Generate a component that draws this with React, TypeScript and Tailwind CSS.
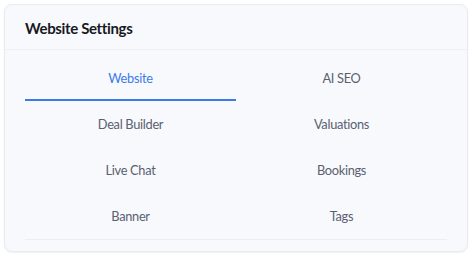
import { useState } from 'react';

const tabs = [
  'Website',
  'AI SEO',
  'Deal Builder',
  'Valuations',
  'Live Chat',
  'Bookings',
  'Banner',
  'Tags',
];

export default function App() {
  const [active, setActive] = useState('Website');

  return (
    <div
      className="h-[256px] w-[474px] bg-white p-[4px] pr-[6px]"
      style={{ fontFamily: 'Lato, "Open Sans", sans-serif' }}
    >
      <div className="h-[248px] rounded-[8px] border border-[#e9ebf2] bg-[#f8f9fd] shadow-[0_1px_2px_rgba(16,24,40,0.06)]">
        <div className="flex h-[45px] items-center border-b border-[#eef0f5] px-[20px] pt-[2px]">
          <h2 className="text-[15px] font-bold tracking-[-0.35px] text-[#17191f]">
            Website Settings
          </h2>
        </div>

        <div className="px-[20px] pt-[5px]">
          <div className="grid grid-cols-2 border-b border-[#eceef4]">
            {tabs.map((tab) => {
              const isActive = tab === active;
              return (
                <button
                  key={tab}
                  type="button"
                  onClick={() => setActive(tab)}
                  className={
                    isActive
                      ? 'flex h-[46px] items-center justify-center border-b-[2px] border-[#3b7be9] pt-[3px] text-[12.8px] tracking-[-0.3px] text-[#3b7be9]'
                      : 'flex h-[46px] items-center justify-center border-b-[2px] border-transparent pt-[3px] text-[12.8px] tracking-[-0.3px] text-[#596070]'
                  }
                >
                  {tab}
                </button>
              );
            })}
          </div>
        </div>
      </div>
    </div>
  );
}
